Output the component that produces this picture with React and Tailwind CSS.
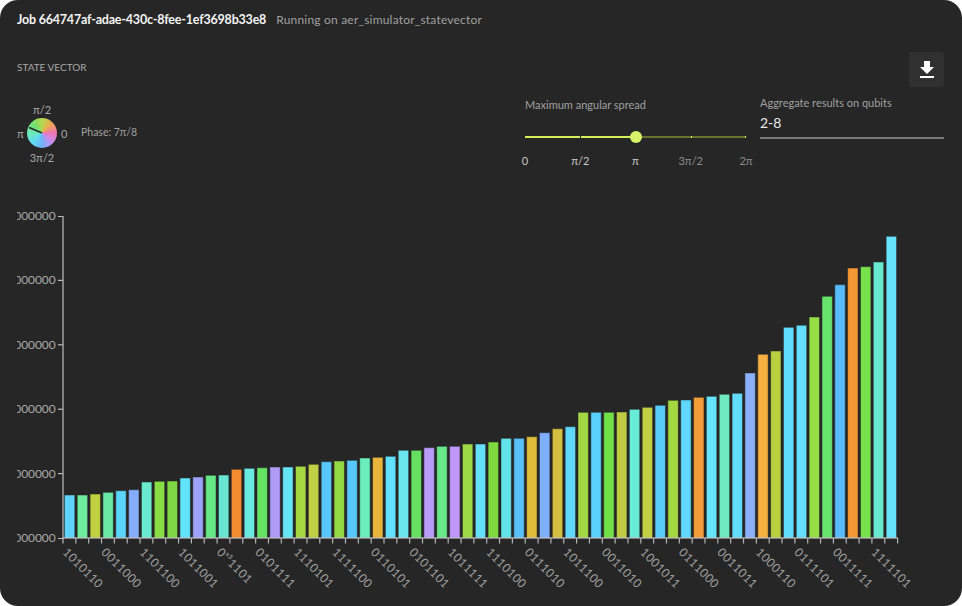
const FONT = "font-['Lato','Open_Sans',sans-serif]";

const bars = [
  [495, "#5fd4fb"], [495, "#6eeb9c"], [494, "#c0cf3e"], [492.3, "#68e9a3"], [490.7, "#5cd5fb"],
  [489.7, "#85adfc"], [482, "#6aebd0"], [481.3, "#88dd44"], [481, "#7ed843"], [478, "#62e4fd"],
  [477, "#9ea2fb"], [475.3, "#66e888"], [475, "#68e4d0"], [469.3, "#f28a30"], [468.3, "#69e9df"],
  [467.7, "#67e363"], [467, "#b09bf9"], [467, "#66e6f4"], [466.3, "#a6d843"], [464.3, "#c0cf44"],
  [461.7, "#58c8fb"], [461, "#94d844"], [460.3, "#58c8fa"], [458, "#6ceebc"], [457.3, "#e8b43c"],
  [456.3, "#62e0fe"], [450.3, "#6ce6ee"], [450.3, "#66e060"], [447.7, "#b89cfa"], [446.3, "#68e888"],
  [446.3, "#c097fa"], [444, "#9cd944"], [444, "#64e0fe"], [442, "#7ed93e"], [438.3, "#62e4ea"],
  [438.3, "#58c0fa"], [436.7, "#dfbd3a"], [432.7, "#7eaffc"], [428.7, "#d4bf40"], [426.7, "#60d8fe"],
  [412.3, "#a2d844"], [412.3, "#58d0fb"], [412.3, "#74e048"], [412, "#c0cb44"], [409.3, "#68ebd8"],
  [407.3, "#c0cf44"], [405.3, "#58ccfb"], [400.3, "#a4d840"], [400, "#60d8fd"], [397.3, "#f49c38"],
  [396.3, "#66e4fb"], [394.3, "#6ee9c0"], [393.3, "#62dcfb"], [373, "#8bb0fd"], [354.3, "#f4b040"],
  [351, "#b8cf40"], [327.3, "#60dcfd"], [325.3, "#64e0fe"], [317, "#96dc44"], [296.3, "#66e46e"],
  [284.7, "#58bcfa"], [268, "#f49834"], [266.7, "#78e24c"], [262, "#68e9d0"], [236.3, "#66e4fc"],
];

const labels = [
  "1010110", "0011000", "1101100", "1011001", "0ˣ³1101", "0101111", "1110101", "1111100",
  "0110101", "0101101", "1011111", "1110100", "0111010", "1011100", "0011010", "1001011",
  "0111000", "0011011", "1000110", "0111101", "0011111", "1111101",
];

const yTicks = [538, 473.6, 409.2, 344.8, 280.4, 216];

// svg origin sits at page (17, 202)
const Chart = () => {
  const ox = 17;
  const oy = 202;
  const pitch = 12.84;
  return (
    <svg width="945" height="404" className="block overflow-hidden">
      <g transform={`translate(${-ox} ${-oy})`}>
        {bars.map(([top, color], i) => (
          <rect
            key={i}
            x={64.4 + i * pitch}
            y={top}
            width={10.4}
            height={538 - top}
            fill={color}
            stroke="rgba(38,38,38,0.5)"
            strokeWidth="1"
          />
        ))}
        <path d="M58 216.5H63V538.5H58" fill="none" stroke="#bdbdbd" strokeWidth="1.2" />
        {yTicks.slice(1, 5).map((y) => (
          <line key={y} x1="58" x2="63" y1={y} y2={y} stroke="#bdbdbd" strokeWidth="1.2" />
        ))}
        {yTicks.map((y) => (
          <text key={y} x="55.5" y={y + 4} textAnchor="end" fontSize="12" fill="#a8a8a8" letterSpacing="-0.1">
            0000000
          </text>
        ))}
        <line x1="63" x2="898" y1="538" y2="538" stroke="#e4e4e4" strokeWidth="1.2" />
        {bars.map((_, i) => (
          <line
            key={i}
            x1={63 + (i + 1) * pitch}
            x2={63 + (i + 1) * pitch}
            y1="538"
            y2="543.5"
            stroke="#b4b4b4"
            strokeWidth="1.2"
          />
        ))}
        <line x1="63" x2="63" y1="538" y2="543.5" stroke="#b4b4b4" strokeWidth="1.2" />
        {labels.map((label, i) => (
          <text
            key={label}
            transform={`translate(${62 + i * 38.5} 553) rotate(45)`}
            fontSize="12"
            fill="#a0a0a0"
            letterSpacing="0.3"
          >
            {label}
          </text>
        ))}
      </g>
    </svg>
  );
};

const PhaseWheel = () => (
  <div className="flex items-center">
    <div className="grid grid-cols-[10px_30px_16px] grid-rows-[18px_30px_18px] items-center text-[11px] leading-none text-[#a8a8a8]">
      <span />
      <span className="whitespace-nowrap text-center">π/2</span>
      <span />
      <span>π</span>
      <div className="relative h-[30px] w-[30px] rounded-full bg-[conic-gradient(#b4d850,#eea850_45deg,#f075b4_90deg,#c490f0_135deg,#70b0f8_180deg,#62dcf0_225deg,#6ce8b8_270deg,#70e070_315deg,#b4d850)]">
        <svg width="30" height="30" className="absolute inset-0">
          <line x1="15" y1="15" x2="2.1" y2="9.6" stroke="#262626" strokeWidth="1.6" />
        </svg>
      </div>
      <span className="pl-[4px]">0</span>
      <span />
      <span className="whitespace-nowrap text-center">3π/2</span>
      <span />
    </div>
    <span className="ml-[8px] text-[10.5px] text-[#a0a0a0]">Phase: 7π/8</span>
  </div>
);

const ticks = [
  { label: "0", at: 0, bright: true },
  { label: "π/2", at: 25, bright: true },
  { label: "π", at: 50, bright: true },
  { label: "3π/2", at: 75, bright: false },
  { label: "2π", at: 100, bright: false },
];

const SpreadSlider = () => (
  <div className="w-[221px] pt-[2px]">
    <div className="text-[11px] leading-[14px] text-[#a0a0a0]">Maximum angular spread</div>
    <div className="relative mt-[24px] h-[2px] bg-[#69732f]">
      <div className="h-full w-1/2 bg-[#d4ee5a]" />
      <span className="absolute left-1/4 top-0 h-full w-[1px] bg-[#262626]" />
      <span className="absolute left-3/4 top-0 h-full w-[1px] bg-[#d4ee5a]" />
      <span className="absolute right-0 top-0 h-full w-[1px] bg-[#d4ee5a]" />
      <span className="absolute left-1/2 top-1/2 h-[12px] w-[12px] -translate-x-1/2 -translate-y-1/2 rounded-full bg-[#d8f26a]" />
    </div>
    <div className="relative mt-[16px] h-[14px] text-[11px] leading-[14px]">
      {ticks.map((t) => (
        <span
          key={t.label}
          className={`absolute -translate-x-1/2 whitespace-nowrap ${t.bright ? "text-[#c8c8c8]" : "text-[#8c8c8c]"}`}
          style={{ left: `${t.at}%` }}
        >
          {t.label}
        </span>
      ))}
    </div>
  </div>
);

const DownloadIcon = () => (
  <svg width="24" height="24" viewBox="0 0 24 24" fill="#ffffff">
    <path d="M19 9h-4V3H9v6H5l7 7 7-7zM5 18v2h14v-2H5z" />
  </svg>
);

export default function App() {
  return (
    <div className={`h-[606px] w-[962px] overflow-hidden bg-white ${FONT}`}>
      <div className="flex h-full flex-col rounded-[18px] bg-[#262626]">
        <div className="flex items-baseline gap-[10px] pl-[17px] pt-[12px] leading-[16px]">
          <span className="text-[12.5px] font-bold tracking-[-0.2px] text-[#f4f4f4]">Job 664747af-adae-430c-8fee-1ef3698b33e8</span>
          <span className="text-[12px] tracking-[0.2px] text-[#a0a0a0]">Running on aer_simulator_statevector</span>
        </div>
        <div className="flex justify-between pl-[17px] pr-[18px] pt-[24px]">
          <div>
            <div className="mt-[8px] text-[10px] leading-[14px] text-[#a8a8a8]">STATE VECTOR</div>
            <div className="mt-[26px]">
              <PhaseWheel />
            </div>
          </div>
          <div className="flex flex-col items-end">
            <button className="flex h-[35px] w-[35px] items-center justify-center rounded-[2px] bg-[#303030]">
              <DownloadIcon />
            </button>
            <div className="mt-[9px] flex gap-[14px]">
              <SpreadSlider />
              <div className="w-[184px]">
                <div className="text-[11px] leading-[14px] text-[#a0a0a0]">Aggregate results on qubits</div>
                <div className="mt-[3px] border-b-2 border-[#7a7a7a] pb-[4px] text-[14px] leading-[20px] text-[#e8e8e8]">2-8</div>
              </div>
            </div>
          </div>
        </div>
        <div className="mt-auto pl-[17px]">
          <Chart />
        </div>
      </div>
    </div>
  );
}
